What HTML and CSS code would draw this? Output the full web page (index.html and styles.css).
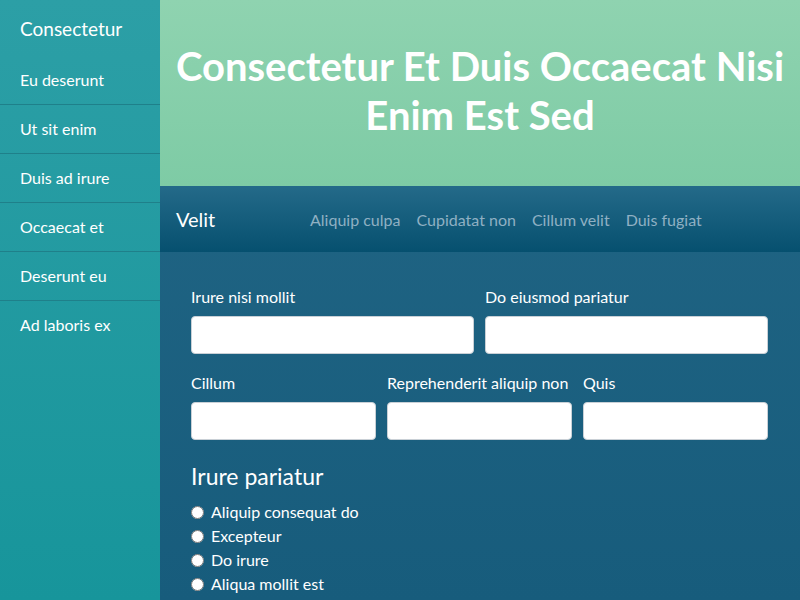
FILE: index.html
```html
<!DOCTYPE html>
<html lang="la">
<head>
<meta charset="UTF-8">
<meta name="viewport" content="width=device-width, initial-scale=1.0">
<title>Consectetur</title>
<link rel="stylesheet" href="styles.css">
</head>
<body>
<div class="layout">
  <aside class="sidebar">
    <div class="brand">Consectetur</div>
    <a href="#">Eu deserunt</a>
    <a href="#">Ut sit enim</a>
    <a href="#">Duis ad irure</a>
    <a href="#">Occaecat et</a>
    <a href="#">Deserunt eu</a>
    <a href="#" class="last">Ad laboris ex</a>
  </aside>

  <div class="main">
    <header class="hero">
      <h1>Consectetur Et Duis Occaecat Nisi Enim Est Sed</h1>
    </header>

    <nav class="topnav">
      <span class="nav-title">Velit</span>
      <div class="nav-links">
        <a href="#">Aliquip culpa</a>
        <a href="#">Cupidatat non</a>
        <a href="#">Cillum velit</a>
        <a href="#">Duis fugiat</a>
      </div>
    </nav>

    <form class="content">
      <div class="row two">
        <label class="field">Irure nisi mollit<input type="text"></label>
        <label class="field">Do eiusmod pariatur<input type="text"></label>
      </div>
      <div class="row three">
        <label class="field">Cillum<input type="text"></label>
        <label class="field">Reprehenderit aliquip non<input type="text"></label>
        <label class="field">Quis<input type="text"></label>
      </div>

      <h2>Irure pariatur</h2>
      <label class="choice"><input type="radio" name="opt"> Aliquip consequat do</label>
      <label class="choice"><input type="radio" name="opt"> Excepteur</label>
      <label class="choice"><input type="radio" name="opt"> Do irure</label>
      <label class="choice"><input type="radio" name="opt"> Aliqua mollit est</label>
    </form>
  </div>
</div>
</body>
</html>
```

FILE: styles.css
```css
* { box-sizing: border-box; }
html, body { height: 100%; }
body { margin: 0; font-family: Lato, "Open Sans", Arial, sans-serif; color: #fff; overflow: hidden; }
a { color: inherit; text-decoration: none; }

.layout { display: flex; height: 100%; }

.sidebar { width: 160px; flex-shrink: 0; background: linear-gradient(#2c9fa6, #17959b); display: flex; flex-direction: column; }
.brand { height: 56px; padding: 0 20px; font-size: 19px; line-height: 58px; }
.sidebar a { padding: 14px 20px; font-size: 16px; line-height: 20px; border-bottom: 1px solid #1f808a; }
.sidebar a.last { border-bottom: none; }

.main { flex: 1; min-width: 0; display: flex; flex-direction: column; background: linear-gradient(#236786, #175c7c); }

.hero { height: 186px; display: flex; align-items: center; justify-content: center; padding: 0 8px 5px; background: linear-gradient(#8fd3b0, #7ecba5); }
.hero h1 { margin: 0; text-align: center; font-size: 40px; line-height: 49px; font-weight: 700; }

.topnav { height: 66px; display: flex; align-items: center; padding: 0 16px; background: linear-gradient(#246a89, #06506f); }
.nav-title { font-size: 20px; width: 134px; }
.nav-links { display: flex; gap: 16px; }
.nav-links a { color: #8fb0c3; font-size: 16px; }

.content { padding: 36px 32px 0 31px; }
.row { display: grid; gap: 11px; margin-bottom: 20px; }
.row.two { grid-template-columns: 1fr 1fr; }
.row.three { grid-template-columns: 1fr 1fr 1fr; }
.field { display: flex; flex-direction: column; min-width: 0; font-size: 16px; line-height: 18px; }
.field input { width: 100%; min-width: 0; margin-top: 10px; height: 38px; border: 1px solid #c9d0d6; border-radius: 4px; background: #fff; font: inherit; padding: 0 8px; }

h2 { margin: 23px 0 11px; font-size: 23px; font-weight: 400; line-height: 26px; }
.choice { display: flex; align-items: center; font-size: 16px; line-height: 24px; }
.choice input { margin: 0 7px 0 0; width: 13px; height: 13px; }
```
